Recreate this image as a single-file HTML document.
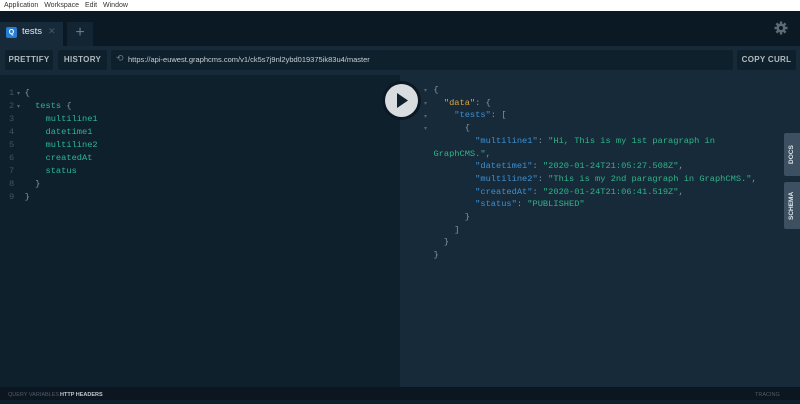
<!DOCTYPE html>
<html><head><style>
*{margin:0;padding:0;box-sizing:border-box}
body{width:800px;height:400px;overflow:hidden;background:#0f202d;font-family:"Liberation Sans",sans-serif;position:relative}
.abs{position:absolute}
.menu{left:0;top:0;width:800px;height:11px;background:#fff;font-size:7px;color:#333;line-height:11px;padding-left:4px;word-spacing:4px}
.tabbar{left:0;top:11px;width:800px;height:35px;background:#0b1924}
.tab{left:0;top:22px;width:63px;height:24px;background:#172a3a}
.q{left:6px;top:27px;width:11px;height:11px;background:#2a7ed2;border-radius:2px;color:#fff;font-size:7px;font-weight:bold;text-align:center;line-height:11px}
.toolbar{left:0;top:46px;width:800px;height:29px;background:#172a3a}
.btn{top:50px;height:20px;background:#0f202d;color:#b3bac0;font-size:8px;font-weight:bold;line-height:20px;text-align:center;border-radius:2px;letter-spacing:.3px}
.url{left:111px;top:50px;width:622px;height:20px;background:#0f202d;color:#c8ced3;font-size:7.5px;line-height:20px;padding-left:17px;border-radius:2px}
.right{left:400px;top:75px;width:400px;height:312px;background:#172a3a}
.bottom{left:0;top:387px;width:800px;height:13px;background:#0b1621;font-size:5.5px;color:#4d5d6a;line-height:17px}
.code{font-family:"Liberation Mono",monospace;font-size:8.7px;white-space:pre;line-height:13px}
.ln{color:#44525e}
.ar{color:#55636e;font-size:6px;font-family:"DejaVu Sans",sans-serif;line-height:6px}
.g{color:#2bb598}.p{color:#8a949c}.k{color:#3d8fd1}.o{color:#e0a23a}.s{color:#2fb487}
.side{left:784px;width:16px;background:#3c5061;color:#dfe5ea;font-size:6.5px;font-weight:bold;writing-mode:vertical-rl;transform:rotate(180deg);text-align:center;border-radius:0 2px 2px 0}
</style></head><body>
<div class="abs menu">Application Workspace Edit Window</div>
<div class="abs tabbar"></div>
<div class="abs tab"></div>
<div class="abs q">Q</div>
<div class="abs" style="left:22px;top:26px;color:#e6eaed;font-size:9.5px">tests</div>
<div class="abs" style="left:48px;top:26px;color:#4a5a66;font-size:9px">✕</div>
<div class="abs" style="left:67px;top:22px;width:26px;height:24px;background:#132533;color:#6b7a86;font-size:16px;text-align:center;line-height:22px">+</div>
<svg class="abs" style="left:774px;top:21px" width="14" height="14" viewBox="0 0 14 14"><g fill="#5e6b75"><circle cx="7" cy="7" r="4.5"/><rect x="5.8" y="0.5" width="2.4" height="13"/><rect x="0.5" y="5.8" width="13" height="2.4"/><rect x="5.8" y="0.5" width="2.4" height="13" transform="rotate(45 7 7)"/><rect x="5.8" y="0.5" width="2.4" height="13" transform="rotate(-45 7 7)"/></g><circle cx="7" cy="7" r="2" fill="#0b1924"/></svg>
<div class="abs toolbar"></div>
<div class="abs btn" style="left:5px;width:48px">PRETTIFY</div>
<div class="abs btn" style="left:58px;width:49px">HISTORY</div>
<div class="abs url">https://api-euwest.graphcms.com/v1/ck5s7j9nl2ybd019375ik83u4/master</div>
<div class="abs" style="left:116px;top:53px;color:#6b7a86;font-size:9px">⟲</div>
<div class="abs btn" style="left:737px;width:59px">COPY CURL</div>
<div class="abs right"></div>
<div class="abs code" style="left:9px;top:87px"><span class="ln">1</span>  <span class="p">{</span>
<span class="ln">2</span>    <span class="g">tests</span> <span class="p">{</span>
<span class="ln">3</span>      <span class="g">multiline1</span>
<span class="ln">4</span>      <span class="g">datetime1</span>
<span class="ln">5</span>      <span class="g">multiline2</span>
<span class="ln">6</span>      <span class="g">createdAt</span>
<span class="ln">7</span>      <span class="g">status</span>
<span class="ln">8</span>    <span class="p">}</span>
<span class="ln">9</span>  <span class="p">}</span></div>
<div class="abs ar" style="left:17px;top:91px">▾</div>
<div class="abs ar" style="left:17px;top:104px">▾</div>
<div class="abs ar" style="left:424px;top:88px">▾</div>
<div class="abs ar" style="left:424px;top:101px">▾</div>
<div class="abs ar" style="left:424px;top:114px">▾</div>
<div class="abs ar" style="left:424px;top:126px">▾</div>
<div class="abs code" style="left:423px;top:84px;line-height:12.7px"><span class="p">  {</span>
    <span class="o">"data"</span><span class="p">: {</span>
      <span class="k">"tests"</span><span class="p">: [</span>
        <span class="p">{</span>
          <span class="k">"multiline1"</span><span class="p">: </span><span class="s">"Hi, This is my 1st paragraph in</span>
  <span class="s">GraphCMS."</span><span class="p">,</span>
          <span class="k">"datetime1"</span><span class="p">: </span><span class="s">"2020-01-24T21:05:27.508Z"</span><span class="p">,</span>
          <span class="k">"multiline2"</span><span class="p">: </span><span class="s">"This is my 2nd paragraph in GraphCMS."</span><span class="p">,</span>
          <span class="k">"createdAt"</span><span class="p">: </span><span class="s">"2020-01-24T21:06:41.519Z"</span><span class="p">,</span>
          <span class="k">"status"</span><span class="p">: </span><span class="s">"PUBLISHED"</span>
        <span class="p">}</span>
      <span class="p">]</span>
    <span class="p">}</span>
  <span class="p">}</span></div>
<div class="abs" style="left:382px;top:81px;width:39px;height:39px;border-radius:50%;background:#0b1924"></div>
<div class="abs" style="left:385px;top:84px;width:33px;height:33px;border-radius:50%;background:#d9dde0"></div>
<svg class="abs" style="left:396px;top:93px" width="13" height="15"><path d="M1 0 L12 7.5 L1 15 Z" fill="#0f202d"/></svg>
<div class="abs side" style="top:133px;height:43px;line-height:16px">DOCS</div>
<div class="abs side" style="top:182px;height:47px;line-height:16px">SCHEMA</div>
<div class="abs bottom"><span style="position:absolute;left:8px">QUERY VARIABLES</span><span style="position:absolute;left:60px;color:#c0c8cf;font-weight:bold">HTTP HEADERS</span><span style="position:absolute;left:755px">TRACING</span></div>
</body></html>
